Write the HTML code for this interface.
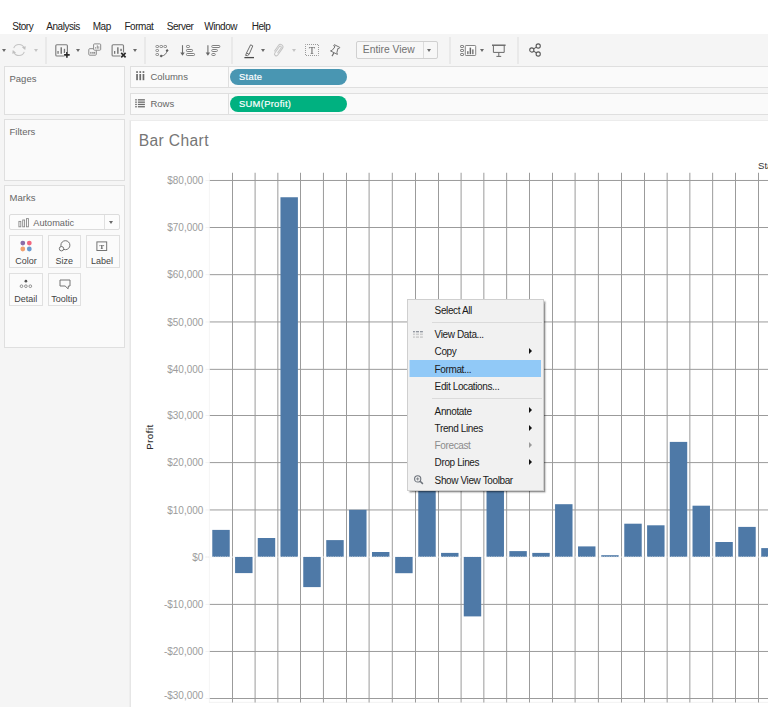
<!DOCTYPE html>
<html lang="en">
<head>
<meta charset="utf-8">
<title>Bar Chart</title>
<style>
html,body{margin:0;padding:0;}
body{width:768px;height:707px;overflow:hidden;position:relative;background:#ffffff;
  font-family:"Liberation Sans",Arial,sans-serif;font-size:10px;color:#333;}
.abs{position:absolute;}
#app{position:absolute;left:0;top:0;width:768px;height:707px;overflow:hidden;background:#f5f5f5;}
#menubar{position:absolute;left:0;top:0;width:768px;height:34px;background:#fff;}
#menubar span{position:absolute;top:19.9px;margin-left:-0.3px;line-height:14px;font-size:10px;letter-spacing:-0.45px;color:#222;white-space:nowrap;}
#toolbar{position:absolute;left:0;top:34px;width:768px;height:32px;background:#f5f5f5;}
#toolbar .sep{position:absolute;top:3px;width:2px;height:27px;background:#e9e9e9;}
#toolbar svg{position:absolute;overflow:visible;}
.caret{position:absolute;width:0;height:0;border-left:2.6px solid transparent;border-right:2.6px solid transparent;border-top:3px solid #6a6a6a;}
.caret.lt{border-top-color:#c4c4c4;}
#fit{position:absolute;left:356px;top:7px;width:82px;height:18px;box-sizing:border-box;border:1px solid #d0d0d0;border-radius:2px;background:#f7f7f7;}
#fit .t{position:absolute;left:5.8px;top:0.2px;line-height:16px;font-size:10.3px;color:#717171;white-space:nowrap;}
#fit .d{position:absolute;left:66px;top:0;width:1px;height:16px;background:#dcdcdc;}
.panel{position:absolute;box-sizing:border-box;background:#fafafa;border:1px solid #dfdfdf;}
.panel .h{position:absolute;left:4.5px;top:6px;font-size:9.5px;line-height:12px;color:#666;}
#marks .h{position:absolute;font-size:9.5px;line-height:12px;color:#666;}
.bt{position:absolute;text-align:center;font-size:9px;line-height:12px;color:#444;white-space:nowrap;}
.shelf{position:absolute;left:130px;width:640px;height:22px;box-sizing:border-box;background:#fafafa;border:1px solid #dfdfdf;}
.shelf .lbl{position:absolute;left:19.4px;top:0.3px;line-height:20px;font-size:9.5px;color:#666;}
.shelf .dv{position:absolute;left:97px;top:0;width:1px;height:20px;background:#dfdfdf;}
.shelf svg{position:absolute;}
.pill{position:absolute;left:99.2px;top:2.3px;width:117px;height:16px;border-radius:8px;color:#fff;font-size:9.4px;letter-spacing:0.3px;-webkit-text-stroke:0.18px #fff;line-height:15.4px;box-sizing:border-box;padding-left:8.8px;}
.mbtn{position:absolute;box-sizing:border-box;border:1px solid #e0e0e0;background:#fbfbfb;}
.mbtn .t{position:absolute;left:0;right:0;bottom:1.5px;text-align:center;font-size:10px;line-height:12px;color:#444;}
.mbtn svg{position:absolute;}
#sheet{position:absolute;left:129px;top:120px;width:640px;height:600px;background:#fff;border-left:2px solid #e6e6e6;border-left-color:#e6e6e6;border-top:1px solid #ececec;box-sizing:border-box;box-shadow:inset 0 0 0 0 #fff;}
#sheet:before{content:'';position:absolute;left:-2px;top:-1px;width:1px;height:600px;background:#eeeeee;}
#title{position:absolute;left:138.7px;top:129.6px;font-size:15.6px;letter-spacing:0.38px;line-height:22px;color:#767676;white-space:nowrap;}
.chart{position:absolute;left:0;top:0;}
.ylab{position:absolute;left:130px;width:73.4px;text-align:right;font-size:10px;line-height:12px;color:#9c9c9c;white-space:nowrap;}
#profit{position:absolute;left:149.5px;top:436.6px;width:0;height:0;}
#profit span{position:absolute;left:-20px;top:-7px;width:40px;height:14px;line-height:14px;text-align:center;font-size:9.7px;letter-spacing:0.5px;color:#2e2e2e;-webkit-text-stroke:0.12px #2e2e2e;transform:rotate(-90deg);white-space:nowrap;}
#colhdr{position:absolute;left:758px;top:159px;font-size:9.6px;line-height:14px;color:#333;white-space:nowrap;}
#menu{position:absolute;left:407px;top:299px;width:137px;height:191.5px;box-sizing:border-box;background:#f1f1f1;border:1px solid #cfcfcf;box-shadow:1.5px 1.5px 1.6px rgba(0,0,0,0.42);}
#menu .it{position:absolute;left:26.6px;font-size:10px;letter-spacing:-0.38px;line-height:14px;color:#1a1a1a;white-space:nowrap;}
#menu .it.dis{color:#8c8c8c;}
#menu .sp{position:absolute;left:24px;width:109.5px;height:1px;background:#dadada;}
#menu .hl{position:absolute;left:1px;top:60px;width:132px;height:17px;background:linear-gradient(to right,#c4def4 0,#c4def4 1px,#91c9f7 1px);}
#menu .ar{position:absolute;left:121px;width:0;height:0;border-top:3px solid transparent;border-bottom:3px solid transparent;border-left:3.6px solid #111;}
#menu .ar.dis{border-left-color:#9a9a9a;}
#menu svg{position:absolute;}

</style>
</head>
<body>
<div id="app">
<div id="menubar">
  <span style="left:12.5px">Story</span>
  <span style="left:46.5px">Analysis</span>
  <span style="left:93px">Map</span>
  <span style="left:124.7px">Format</span>
  <span style="left:167px">Server</span>
  <span style="left:204.5px">Window</span>
  <span style="left:252px">Help</span>
</div>
<div id="toolbar">
  <div class="caret" style="left:2.2px;top:15px"></div>
  <!-- refresh -->
  <svg style="left:12px;top:9px" width="14" height="14" viewBox="0 0 14 14"><g fill="none" stroke="#c4c4c4" stroke-width="1.1"><path d="M1.74 5.08A5.6 5.6 0 0 1 12.2 5"/><path d="M12.26 8.92A5.6 5.6 0 0 1 1.8 9"/></g><path d="M9.9 4.3l3.9-1.1-0.6 3.9z" fill="#c0c0c0"/><path d="M4.1 9.7l-3.9 1.1 0.6-3.9z" fill="#c0c0c0"/></svg>
  <div class="caret lt" style="left:33.6px;top:15px"></div>
  <div class="sep" style="left:45px"></div>
  <!-- new worksheet -->
  <svg style="left:55px;top:10px" width="15" height="15" viewBox="0 0 15 15"><rect x="0.8" y="0.7" width="11.6" height="11.3" rx="1.1" fill="none" stroke="#7d7d7d" stroke-width="1.15"/><g fill="#777"><rect x="2.4" y="7" width="1.3" height="2.8"/><rect x="5.5" y="3.3" width="1.5" height="6.5"/><rect x="8.8" y="4.8" width="1.3" height="4.2"/></g><path d="M11.9 7.9v6M8.9 10.9h6" stroke="#f5f5f5" stroke-width="3.4"/><path d="M11.9 8.1v5.6M9.1 10.9h5.6" stroke="#2a2a2a" stroke-width="1.6"/></svg>
  <div class="caret" style="left:76.1px;top:15px"></div>
  <!-- duplicate -->
  <svg style="left:88px;top:9px" width="14" height="14" viewBox="0 0 14 14"><g stroke="#8a8a8a" stroke-width="1"><rect x="0.8" y="5.7" width="7.5" height="6.5" rx="0.9" fill="#f8f8f8"/><rect x="5.6" y="0.9" width="7.1" height="6.3" rx="0.9" fill="#f8f8f8"/></g><g fill="#8c8c8c"><rect x="2.2" y="8.9" width="1.2" height="1.8"/><rect x="3.8" y="8.9" width="1" height="1.8"/><rect x="5.3" y="8.9" width="1.9" height="1.8"/><rect x="7.3" y="4" width="0.8" height="1.7"/><rect x="8.8" y="2.4" width="1" height="3.3"/><rect x="10.4" y="3.3" width="0.8" height="2.4"/></g></svg>
  <!-- clear -->
  <svg style="left:111px;top:10px" width="16" height="15" viewBox="0 0 16 15"><rect x="1.1" y="0.7" width="11.4" height="11.3" rx="1.1" fill="none" stroke="#7d7d7d" stroke-width="1.15"/><g fill="#777"><rect x="3" y="7" width="1.3" height="2.8"/><rect x="6.1" y="3.3" width="1.5" height="6.5"/><rect x="9.3" y="4.8" width="1.5" height="2.3"/></g><path d="M10 8.7l4.8 4.8M14.8 8.7l-4.8 4.8" stroke="#f5f5f5" stroke-width="3.4"/><path d="M10.2 8.9l4.4 4.4M14.6 8.9l-4.4 4.4" stroke="#2a2a2a" stroke-width="1.7"/></svg>
  <div class="caret" style="left:132.7px;top:15px"></div>
  <div class="sep" style="left:144px"></div>
  <!-- swap -->
  <svg style="left:155px;top:11px" width="14" height="13" viewBox="0 0 14 13"><g fill="#fbfbfb" stroke="#8a8a8a" stroke-width="0.9"><rect x="0.9" y="0.5" width="2.6" height="2" rx="0.5"/><rect x="4.9" y="0.5" width="2.6" height="2" rx="0.5"/><rect x="8.9" y="0.5" width="2.6" height="2" rx="0.5"/><rect x="0.9" y="4.5" width="2.6" height="2" rx="0.5"/><rect x="0.9" y="8.5" width="2.6" height="2" rx="0.5"/></g><path d="M6.3 11.1Q11.4 10.3 12 5.6" fill="none" stroke="#6e6e6e" stroke-width="0.95"/><path d="M12.1 3.9l1.5 1.5-1.5 1.5-1.5-1.5z" fill="#5c5c5c"/><path d="M6.1 9.6l1.5 1.5-1.5 1.5-1.5-1.5z" fill="#5c5c5c"/></svg>
  <!-- sort asc -->
  <svg style="left:180px;top:11px" width="15" height="12" viewBox="0 0 15 12"><path d="M2.5 0.2v9" stroke="#707070" stroke-width="1.1"/><path d="M0.3 7.6h4.4l-2.2 3.2z" fill="#666"/><g fill="#fbfbfb" stroke="#808080" stroke-width="1"><rect x="6.5" y="0.5" width="3" height="2" rx="0.7"/><rect x="6.5" y="4.5" width="6" height="2" rx="0.7"/><rect x="6.5" y="8.5" width="8" height="2" rx="0.7"/></g></svg>
  <!-- sort desc -->
  <svg style="left:205px;top:11px" width="16" height="12" viewBox="0 0 16 12"><path d="M2.9 0.2v9" stroke="#707070" stroke-width="1.1"/><path d="M0.7 7.6h4.4l-2.2 3.2z" fill="#666"/><g fill="#fbfbfb" stroke="#808080" stroke-width="1"><rect x="6.8" y="0.5" width="8" height="2" rx="0.7"/><rect x="6.8" y="4.5" width="5.5" height="2" rx="0.7"/><rect x="6.8" y="8.5" width="3.4" height="2" rx="0.7"/></g></svg>
  <div class="sep" style="left:230.5px"></div>
  <!-- highlighter -->
  <svg style="left:244px;top:9.5px" width="11" height="15" viewBox="0 0 11 15"><path d="M6.6 0.8l2.2 1.1-3.7 8.4-2.6-1.3zM2.5 9l-0.9 2.4 2 0.2 1.5-1.3" fill="none" stroke="#6e6e6e" stroke-width="1" stroke-linejoin="round"/><path d="M0.4 13.6h9.6" stroke="#4a4a4a" stroke-width="1.3"/></svg>
  <div class="caret" style="left:260.9px;top:15px"></div>
  <!-- paperclip -->
  <svg style="left:271px;top:8px" width="14" height="16" viewBox="0 0 14 16"><g transform="translate(7.3 8.0) rotate(35) scale(1.13)"><path d="M-2.2 2.6V-3.3A2.2 2.2 0 0 1 2.2 -3.3V3.9A1.6 1.6 0 0 1 -1 3.9V-2.9A1 1 0 0 1 1 -2.9V2.3" fill="none" stroke="#c4c4c4" stroke-width="0.9" stroke-linecap="round"/></g></svg>
  <div class="caret lt" style="left:292.1px;top:15px"></div>
  <!-- text box -->
  <svg style="left:305px;top:10px;filter:grayscale(1)" width="14" height="12" viewBox="0 0 14 12"><rect x="0.5" y="0.5" width="13" height="11" fill="none" stroke="#9a9a9a" stroke-width="1" stroke-dasharray="1 1" stroke-dashoffset="0.5"/><text x="6.9" y="9.7" font-family="Liberation Serif, serif" font-size="10.5" text-anchor="middle" fill="#666">T</text></svg>
  <!-- pin -->
  <svg style="left:330px;top:9.5px" width="11" height="13" viewBox="0 0 11 13"><path d="M4.4 0.7L9.8 3.4 8.9 4.7 7.9 4.4 6.9 8.6 7.4 10.4 0.5 6.9 2.1 6.4 5 2.8 3.7 1.9Z" fill="none" stroke="#6c6c6c" stroke-width="0.95" stroke-linejoin="round"/><path d="M3.9 8.9L2 12.1" stroke="#6c6c6c" stroke-width="1.1"/></svg>
  <div id="fit"><div class="t">Entire View</div><div class="d"></div><div class="caret" style="left:70.3px;top:6.8px;border-left-width:2.9px;border-right-width:2.9px;border-top-width:3.3px"></div></div>
  <div class="sep" style="left:449px"></div>
  <!-- show me -->
  <svg style="left:460px;top:11px" width="17" height="11" viewBox="0 0 17 11"><g fill="#fbfbfb" stroke="#808080" stroke-width="0.95"><rect x="0.6" y="0.5" width="2.9" height="2" rx="0.4"/><rect x="0.6" y="4.5" width="2.9" height="2" rx="0.4"/><rect x="0.6" y="8.5" width="2.9" height="2" rx="0.4"/><rect x="5.3" y="0.5" width="10.4" height="10" rx="0.8"/></g><g fill="#666"><rect x="7.2" y="6.2" width="1.3" height="3"/><rect x="9.6" y="2.6" width="1.5" height="6.6"/><rect x="12.2" y="4.4" width="1.3" height="4.8"/></g></svg>
  <div class="caret" style="left:479.6px;top:15px"></div>
  <!-- presentation -->
  <svg style="left:492px;top:10px" width="14" height="13" viewBox="0 0 14 13"><path d="M0 1.2h13.6" stroke="#5a5a5a" stroke-width="1.3"/><path d="M1.4 1.6v6.8h10.8V1.6M6.8 8.6v3.6M4.4 12.4h4.8" fill="none" stroke="#6a6a6a" stroke-width="1"/></svg>
  <div class="sep" style="left:517px"></div>
  <!-- share -->
  <svg style="left:529.2px;top:9.2px" width="12" height="14" viewBox="0 0 12 14"><g fill="none" stroke="#5a5a5a" stroke-width="1.1"><circle cx="2.8" cy="7" r="2.1"/><circle cx="9.2" cy="3" r="2.1"/><circle cx="9.2" cy="11" r="2.1"/><path d="M4.6 5.9l2.8-1.8M4.6 8.1l2.8 1.8"/></g></svg>
</div>

<div class="panel" style="left:4px;top:66px;width:121px;height:49px"><div class="h">Pages</div></div>
<div class="panel" style="left:4px;top:119px;width:121px;height:62px"><div class="h">Filters</div></div>
<div class="panel" style="left:4px;top:185px;width:121px;height:163px"></div>
<div id="marks">
  <div class="h" style="left:9.6px;top:192.4px">Marks</div>
  <div class="abs" style="left:9px;top:214px;width:111px;height:16px;box-sizing:border-box;border:1px solid #dcdcdc;border-radius:2px;background:#fcfcfc"></div>
  <svg class="abs" style="left:17.5px;top:217.8px" width="12" height="10" viewBox="0 0 12 10"><g fill="none" stroke="#8a8a8a" stroke-width="0.9"><rect x="0.9" y="3.4" width="1.9" height="5.4"/><rect x="4.7" y="2" width="1.9" height="6.8"/><rect x="8.5" y="0.6" width="1.9" height="8.2"/></g></svg>
  <div class="abs" style="left:33.3px;top:216.3px;line-height:14px;font-size:9.2px;color:#666;white-space:nowrap">Automatic</div>
  <div class="abs" style="left:104px;top:215px;width:1px;height:14px;background:#e0e0e0"></div>
  <div class="caret" style="left:109px;top:221.2px;border-left-width:2.8px;border-right-width:2.8px"></div>

  <div class="mbtn" style="left:9px;top:235px;width:34px;height:33px"></div>
  <div class="mbtn" style="left:48px;top:235px;width:33px;height:33px"></div>
  <div class="mbtn" style="left:86px;top:235px;width:34px;height:33px"></div>
  <div class="mbtn" style="left:9px;top:273px;width:34px;height:33px"></div>
  <div class="mbtn" style="left:48px;top:273px;width:33px;height:33px"></div>

  <svg class="abs" style="left:19px;top:239px" width="14" height="14" viewBox="0 0 14 14"><circle cx="3.8" cy="4.1" r="2.4" fill="#8a6ca8"/><circle cx="10.3" cy="4.1" r="2.4" fill="#f2667f"/><circle cx="3.8" cy="10" r="2.4" fill="#f0a070"/><circle cx="10.3" cy="10" r="2.4" fill="#6a9ad0"/></svg>
  <div class="bt" style="left:9px;width:34px;top:255.4px">Color</div>
  <svg class="abs" style="left:58px;top:240px" width="14" height="12" viewBox="0 0 14 12"><g fill="none" stroke="#6e6e6e" stroke-width="0.95"><circle cx="7.4" cy="5.2" r="4.5"/><circle cx="3.5" cy="8.7" r="2.2" fill="#fbfbfb"/></g></svg>
  <div class="bt" style="left:48px;width:32.5px;top:255.4px">Size</div>
  <svg class="abs" style="left:96px;top:241px;filter:grayscale(1)" width="12" height="11" viewBox="0 0 12 11"><rect x="0.9" y="0.9" width="9.8" height="8.6" fill="none" stroke="#6e6e6e" stroke-width="0.95"/><text x="5.8" y="7.7" font-family="Liberation Serif, serif" font-size="7" font-weight="bold" text-anchor="middle" fill="#555">T</text></svg>
  <div class="bt" style="left:86px;width:32px;top:255.4px">Label</div>
  <svg class="abs" style="left:19px;top:279px" width="14" height="10" viewBox="0 0 14 10"><circle cx="6.9" cy="2.2" r="1.35" fill="#555"/><g fill="none" stroke="#777" stroke-width="0.8"><circle cx="2.5" cy="7.2" r="1.35"/><circle cx="6.9" cy="7.2" r="1.35"/><circle cx="11.3" cy="7.2" r="1.35"/></g></svg>
  <div class="bt" style="left:9px;width:33.6px;top:293.1px">Detail</div>
  <svg class="abs" style="left:58.5px;top:279px" width="13" height="11" viewBox="0 0 13 11"><path d="M1 1h10v6H9.4l-0.3 2.8-3-2.8H1z" fill="none" stroke="#6e6e6e" stroke-width="0.95" stroke-linejoin="round"/></svg>
  <div class="bt" style="left:48px;width:32.7px;top:293.1px">Tooltip</div>
</div>

<div class="shelf" style="top:66px">
  <svg style="left:4.6px;top:4.4px" width="9" height="10" viewBox="0 0 9 10"><g fill="#6a6a6a"><rect x="0.2" y="0.2" width="1.7" height="1.7"/><rect x="3.4" y="0.2" width="1.7" height="1.7"/><rect x="6.6" y="0.2" width="1.7" height="1.7"/><rect x="0.2" y="3" width="1.7" height="6.2"/><rect x="3.4" y="3" width="1.7" height="6.2"/><rect x="6.6" y="3" width="1.7" height="6.2"/></g></svg>
  <div class="lbl">Columns</div><div class="dv"></div>
  <div class="pill" style="background:#4996b2">State</div>
</div>
<div class="shelf" style="top:93px">
  <svg style="left:4px;top:5.3px" width="11" height="9" viewBox="0 0 11 9"><g fill="#6a6a6a"><rect x="0.2" y="0.2" width="1.6" height="1.3"/><rect x="0.2" y="2.5" width="1.6" height="1.3"/><rect x="0.2" y="4.8" width="1.6" height="1.3"/><rect x="0.2" y="7.1" width="1.6" height="1.3"/><rect x="2.9" y="0.2" width="7" height="1.3"/><rect x="2.9" y="2.5" width="7" height="1.3"/><rect x="2.9" y="4.8" width="7" height="1.3"/><rect x="2.9" y="7.1" width="7" height="1.3"/></g></svg>
  <div class="lbl">Rows</div><div class="dv"></div>
  <div class="pill" style="background:#00b180">SUM(Profit)</div>
</div>

<div id="sheet"></div>
<div id="title">Bar Chart</div>
<svg class="chart" width="768" height="707" viewBox="0 0 768 707">
<line x1="209.35" y1="172.75" x2="209.35" y2="702.5" stroke="#f5f5f5" stroke-width="1"/>
<line x1="205.5" y1="180.48" x2="209.45" y2="180.48" stroke="#f2f2f2" stroke-width="1"/>
<line x1="205.5" y1="227.50" x2="209.45" y2="227.50" stroke="#f2f2f2" stroke-width="1"/>
<line x1="205.5" y1="274.67" x2="209.45" y2="274.67" stroke="#f2f2f2" stroke-width="1"/>
<line x1="205.5" y1="321.95" x2="209.45" y2="321.95" stroke="#f2f2f2" stroke-width="1"/>
<line x1="205.5" y1="369.35" x2="209.45" y2="369.35" stroke="#f2f2f2" stroke-width="1"/>
<line x1="205.5" y1="415.50" x2="209.45" y2="415.50" stroke="#f2f2f2" stroke-width="1"/>
<line x1="205.5" y1="462.60" x2="209.45" y2="462.60" stroke="#f2f2f2" stroke-width="1"/>
<line x1="205.5" y1="509.95" x2="209.45" y2="509.95" stroke="#f2f2f2" stroke-width="1"/>
<line x1="205.5" y1="557.00" x2="209.45" y2="557.00" stroke="#f2f2f2" stroke-width="1"/>
<line x1="205.5" y1="604.40" x2="209.45" y2="604.40" stroke="#f2f2f2" stroke-width="1"/>
<line x1="205.5" y1="651.46" x2="209.45" y2="651.46" stroke="#f2f2f2" stroke-width="1"/>
<line x1="205.5" y1="698.50" x2="209.45" y2="698.50" stroke="#f2f2f2" stroke-width="1"/>
<line x1="208.85" y1="702.3" x2="768" y2="702.3" stroke="#f2f2f2" stroke-width="1"/>
<line x1="209.75" y1="180.48" x2="768" y2="180.48" stroke="#9b9b9b" stroke-width="1"/>
<line x1="209.75" y1="227.50" x2="768" y2="227.50" stroke="#9b9b9b" stroke-width="1"/>
<line x1="209.75" y1="274.67" x2="768" y2="274.67" stroke="#9b9b9b" stroke-width="1"/>
<line x1="209.75" y1="321.95" x2="768" y2="321.95" stroke="#9b9b9b" stroke-width="1"/>
<line x1="209.75" y1="369.35" x2="768" y2="369.35" stroke="#9b9b9b" stroke-width="1"/>
<line x1="209.75" y1="415.50" x2="768" y2="415.50" stroke="#9b9b9b" stroke-width="1"/>
<line x1="209.75" y1="462.60" x2="768" y2="462.60" stroke="#9b9b9b" stroke-width="1"/>
<line x1="209.75" y1="509.95" x2="768" y2="509.95" stroke="#9b9b9b" stroke-width="1"/>
<line x1="209.75" y1="604.40" x2="768" y2="604.40" stroke="#9b9b9b" stroke-width="1"/>
<line x1="209.75" y1="651.46" x2="768" y2="651.46" stroke="#9b9b9b" stroke-width="1"/>
<line x1="209.75" y1="698.50" x2="768" y2="698.50" stroke="#9b9b9b" stroke-width="1"/>
<line x1="232.50" y1="172.75" x2="232.50" y2="702.5" stroke="#9b9b9b" stroke-width="1"/>
<line x1="255.10" y1="172.75" x2="255.10" y2="702.5" stroke="#9b9b9b" stroke-width="1"/>
<line x1="277.85" y1="172.75" x2="277.85" y2="702.5" stroke="#9b9b9b" stroke-width="1"/>
<line x1="300.50" y1="172.75" x2="300.50" y2="702.5" stroke="#9b9b9b" stroke-width="1"/>
<line x1="323.45" y1="172.75" x2="323.45" y2="702.5" stroke="#9b9b9b" stroke-width="1"/>
<line x1="346.50" y1="172.75" x2="346.50" y2="702.5" stroke="#9b9b9b" stroke-width="1"/>
<line x1="369.10" y1="172.75" x2="369.10" y2="702.5" stroke="#9b9b9b" stroke-width="1"/>
<line x1="392.30" y1="172.75" x2="392.30" y2="702.5" stroke="#9b9b9b" stroke-width="1"/>
<line x1="415.50" y1="172.75" x2="415.50" y2="702.5" stroke="#9b9b9b" stroke-width="1"/>
<line x1="438.50" y1="172.75" x2="438.50" y2="702.5" stroke="#9b9b9b" stroke-width="1"/>
<line x1="461.10" y1="172.75" x2="461.10" y2="702.5" stroke="#9b9b9b" stroke-width="1"/>
<line x1="483.85" y1="172.75" x2="483.85" y2="702.5" stroke="#9b9b9b" stroke-width="1"/>
<line x1="506.65" y1="172.75" x2="506.65" y2="702.5" stroke="#9b9b9b" stroke-width="1"/>
<line x1="529.50" y1="172.75" x2="529.50" y2="702.5" stroke="#9b9b9b" stroke-width="1"/>
<line x1="552.50" y1="172.75" x2="552.50" y2="702.5" stroke="#9b9b9b" stroke-width="1"/>
<line x1="575.10" y1="172.75" x2="575.10" y2="702.5" stroke="#9b9b9b" stroke-width="1"/>
<line x1="598.40" y1="172.75" x2="598.40" y2="702.5" stroke="#9b9b9b" stroke-width="1"/>
<line x1="621.50" y1="172.75" x2="621.50" y2="702.5" stroke="#9b9b9b" stroke-width="1"/>
<line x1="644.50" y1="172.75" x2="644.50" y2="702.5" stroke="#9b9b9b" stroke-width="1"/>
<line x1="667.15" y1="172.75" x2="667.15" y2="702.5" stroke="#9b9b9b" stroke-width="1"/>
<line x1="689.85" y1="172.75" x2="689.85" y2="702.5" stroke="#9b9b9b" stroke-width="1"/>
<line x1="712.65" y1="172.75" x2="712.65" y2="702.5" stroke="#9b9b9b" stroke-width="1"/>
<line x1="735.50" y1="172.75" x2="735.50" y2="702.5" stroke="#9b9b9b" stroke-width="1"/>
<line x1="758.50" y1="172.75" x2="758.50" y2="702.5" stroke="#9b9b9b" stroke-width="1"/>
<rect x="212.28" y="529.90" width="17.45" height="26.95" fill="#4e79a7"/>
<rect x="257.75" y="538.00" width="17.45" height="18.85" fill="#4e79a7"/>
<rect x="280.45" y="197.25" width="17.45" height="359.60" fill="#4e79a7"/>
<rect x="326.25" y="540.10" width="17.45" height="16.75" fill="#4e79a7"/>
<rect x="349.07" y="509.80" width="17.45" height="47.05" fill="#4e79a7"/>
<rect x="371.98" y="552.00" width="17.45" height="4.85" fill="#4e79a7"/>
<rect x="418.27" y="400.00" width="17.45" height="156.85" fill="#4e79a7"/>
<rect x="441.07" y="552.90" width="17.45" height="3.95" fill="#4e79a7"/>
<rect x="486.52" y="380.00" width="17.45" height="176.85" fill="#4e79a7"/>
<rect x="509.35" y="551.10" width="17.45" height="5.75" fill="#4e79a7"/>
<rect x="532.27" y="552.90" width="17.45" height="3.95" fill="#4e79a7"/>
<rect x="555.07" y="504.20" width="17.45" height="52.65" fill="#4e79a7"/>
<rect x="578.02" y="546.40" width="17.45" height="10.45" fill="#4e79a7"/>
<rect x="601.23" y="555.20" width="17.45" height="1.65" fill="#4e79a7"/>
<rect x="624.27" y="523.70" width="17.45" height="33.15" fill="#4e79a7"/>
<rect x="647.10" y="525.30" width="17.45" height="31.55" fill="#4e79a7"/>
<rect x="669.77" y="441.90" width="17.45" height="114.95" fill="#4e79a7"/>
<rect x="692.52" y="505.70" width="17.45" height="51.15" fill="#4e79a7"/>
<rect x="715.35" y="542.00" width="17.45" height="14.85" fill="#4e79a7"/>
<rect x="738.27" y="526.90" width="17.45" height="29.95" fill="#4e79a7"/>
<rect x="761.23" y="548.10" width="17.45" height="8.75" fill="#4e79a7"/>
<line x1="205.5" y1="557.05" x2="768" y2="557.05" stroke="#f0f0f0" stroke-width="0.9" stroke-dasharray="1.2 1.2"/>
<rect x="235.08" y="556.95" width="17.45" height="16.15" fill="#4e79a7"/>
<rect x="303.25" y="556.95" width="17.45" height="30.15" fill="#4e79a7"/>
<rect x="395.17" y="556.95" width="17.45" height="16.25" fill="#4e79a7"/>
<rect x="463.75" y="556.95" width="17.45" height="59.45" fill="#4e79a7"/>
</svg>
<div class="ylab" style="top:175px">$80,000</div>
<div class="ylab" style="top:222px">$70,000</div>
<div class="ylab" style="top:269px">$60,000</div>
<div class="ylab" style="top:317px">$50,000</div>
<div class="ylab" style="top:364px">$40,000</div>
<div class="ylab" style="top:410px">$30,000</div>
<div class="ylab" style="top:457px">$20,000</div>
<div class="ylab" style="top:505px">$10,000</div>
<div class="ylab" style="top:552px">$0</div>
<div class="ylab" style="top:599px">-$10,000</div>
<div class="ylab" style="top:646px">-$20,000</div>
<div class="ylab" style="top:690px">-$30,000</div>
<div id="profit"><span>Profit</span></div>
<div id="colhdr">State</div>

<div id="menu">
  <div class="hl"></div>
  <div class="it" style="top:4px">Select All</div>
  <div class="sp" style="top:22px"></div>
  <svg style="left:5px;top:30.8px" width="11" height="8" viewBox="0 0 11 8"><g fill="#7a808c"><rect x="0" y="0.2" width="1.9" height="1.1"/><rect x="2.9" y="0.2" width="3.1" height="1.1"/><rect x="7" y="0.2" width="2.9" height="1.1"/></g><g fill="#cdcdcd"><rect x="0" y="2.5" width="1.9" height="1.6"/><rect x="2.9" y="2.5" width="3.1" height="1.6"/><rect x="7" y="2.5" width="2.9" height="1.6"/><rect x="0" y="5.3" width="1.9" height="1.6"/><rect x="2.9" y="5.3" width="3.1" height="1.6"/><rect x="7" y="5.3" width="2.9" height="1.6"/></g></svg>
  <div class="it" style="top:27.9px">View Data...</div>
  <div class="it" style="top:45.2px">Copy</div><div class="ar" style="top:48.2px"></div>
  <div class="it" style="top:62.5px">Format...</div>
  <div class="it" style="top:79.8px">Edit Locations...</div>
  <div class="sp" style="top:98px"></div>
  <div class="it" style="top:104.6px">Annotate</div><div class="ar" style="top:107.2px"></div>
  <div class="it" style="top:121.9px">Trend Lines</div><div class="ar" style="top:124.5px"></div>
  <div class="it dis" style="top:139.1px">Forecast</div><div class="ar dis" style="top:141.8px"></div>
  <div class="it" style="top:156.3px">Drop Lines</div><div class="ar" style="top:158.9px"></div>
  <svg style="left:6px;top:174.5px" width="10" height="10" viewBox="0 0 10 10"><circle cx="3.7" cy="3.9" r="3.1" fill="none" stroke="#6c727a" stroke-width="1.1"/><path d="M6.1 6.3l2.8 2.6" stroke="#6c727a" stroke-width="1.5"/><path d="M2.1 3.9h3.2M3.7 2.3v3.2" stroke="#6c727a" stroke-width="0.8"/></svg>
  <div class="it" style="top:173.6px">Show View Toolbar</div>
</div>
</div>

</body>
</html>
